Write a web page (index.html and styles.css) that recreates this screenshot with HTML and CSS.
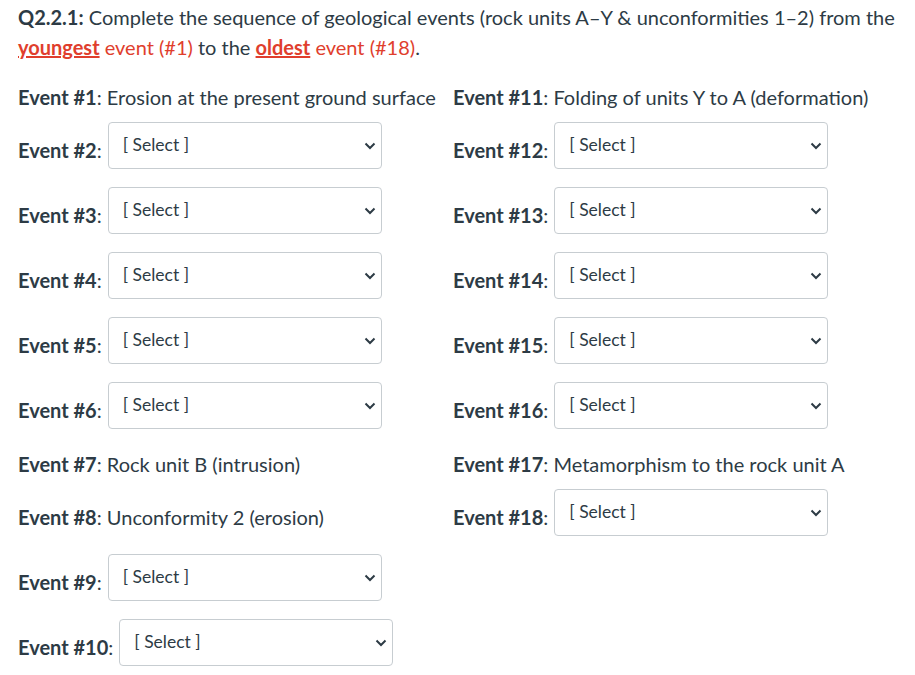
FILE: index.html
```html
<!DOCTYPE html>
<html>
<head>
<meta charset="utf-8">
<link rel="stylesheet" href="styles.css">
</head>
<body>
<div class="page">
  <p class="question"><strong>Q2.2.1:</strong> Complete the sequence of geological events (rock units A–Y &amp; unconformities 1–2) from the <span class="red"><strong><u>youngest</u></strong> event (#1)</span> to the <span class="red"><strong><u>oldest</u></strong> event (#18)</span>.</p>
  <div class="events">
    <div class="cell r1"><span class="lbl"><b>Event #1</b>: Erosion at the present ground surface</span></div>
    <div class="cell r1"><span class="lbl"><b>Event #11</b>: Folding of units Y to A (deformation)</span></div>

    <div class="cell"><span class="lbl"><b>Event #2</b>:</span><div class="sel"><span>[ Select ]</span><svg width="12" height="8" viewBox="0 0 12 8"><path d="M1.5 1.5 L6 6 L10.5 1.5" fill="none" stroke="#2d3b45" stroke-width="2"/></svg></div></div>
    <div class="cell"><span class="lbl"><b>Event #12</b>:</span><div class="sel"><span>[ Select ]</span><svg width="12" height="8" viewBox="0 0 12 8"><path d="M1.5 1.5 L6 6 L10.5 1.5" fill="none" stroke="#2d3b45" stroke-width="2"/></svg></div></div>

    <div class="cell"><span class="lbl"><b>Event #3</b>:</span><div class="sel"><span>[ Select ]</span><svg width="12" height="8" viewBox="0 0 12 8"><path d="M1.5 1.5 L6 6 L10.5 1.5" fill="none" stroke="#2d3b45" stroke-width="2"/></svg></div></div>
    <div class="cell"><span class="lbl"><b>Event #13</b>:</span><div class="sel"><span>[ Select ]</span><svg width="12" height="8" viewBox="0 0 12 8"><path d="M1.5 1.5 L6 6 L10.5 1.5" fill="none" stroke="#2d3b45" stroke-width="2"/></svg></div></div>

    <div class="cell"><span class="lbl"><b>Event #4</b>:</span><div class="sel"><span>[ Select ]</span><svg width="12" height="8" viewBox="0 0 12 8"><path d="M1.5 1.5 L6 6 L10.5 1.5" fill="none" stroke="#2d3b45" stroke-width="2"/></svg></div></div>
    <div class="cell"><span class="lbl"><b>Event #14</b>:</span><div class="sel"><span>[ Select ]</span><svg width="12" height="8" viewBox="0 0 12 8"><path d="M1.5 1.5 L6 6 L10.5 1.5" fill="none" stroke="#2d3b45" stroke-width="2"/></svg></div></div>

    <div class="cell"><span class="lbl"><b>Event #5</b>:</span><div class="sel"><span>[ Select ]</span><svg width="12" height="8" viewBox="0 0 12 8"><path d="M1.5 1.5 L6 6 L10.5 1.5" fill="none" stroke="#2d3b45" stroke-width="2"/></svg></div></div>
    <div class="cell"><span class="lbl"><b>Event #15</b>:</span><div class="sel"><span>[ Select ]</span><svg width="12" height="8" viewBox="0 0 12 8"><path d="M1.5 1.5 L6 6 L10.5 1.5" fill="none" stroke="#2d3b45" stroke-width="2"/></svg></div></div>

    <div class="cell"><span class="lbl"><b>Event #6</b>:</span><div class="sel"><span>[ Select ]</span><svg width="12" height="8" viewBox="0 0 12 8"><path d="M1.5 1.5 L6 6 L10.5 1.5" fill="none" stroke="#2d3b45" stroke-width="2"/></svg></div></div>
    <div class="cell"><span class="lbl"><b>Event #16</b>:</span><div class="sel"><span>[ Select ]</span><svg width="12" height="8" viewBox="0 0 12 8"><path d="M1.5 1.5 L6 6 L10.5 1.5" fill="none" stroke="#2d3b45" stroke-width="2"/></svg></div></div>

    <div class="cell"><span class="lbl"><b>Event #7</b>: Rock unit B (intrusion)</span></div>
    <div class="cell"><span class="lbl"><b>Event #17</b>: Metamorphism to the rock unit A</span></div>

    <div class="cell"><span class="lbl"><b>Event #8</b>: Unconformity 2 (erosion)</span></div>
    <div class="cell"><span class="lbl"><b>Event #18</b>:</span><div class="sel"><span>[ Select ]</span><svg width="12" height="8" viewBox="0 0 12 8"><path d="M1.5 1.5 L6 6 L10.5 1.5" fill="none" stroke="#2d3b45" stroke-width="2"/></svg></div></div>

    <div class="cell"><span class="lbl"><b>Event #9</b>:</span><div class="sel"><span>[ Select ]</span><svg width="12" height="8" viewBox="0 0 12 8"><path d="M1.5 1.5 L6 6 L10.5 1.5" fill="none" stroke="#2d3b45" stroke-width="2"/></svg></div></div>
    <div class="cell"></div>

    <div class="cell"><span class="lbl"><b>Event #10</b>:</span><div class="sel"><span>[ Select ]</span><svg width="12" height="8" viewBox="0 0 12 8"><path d="M1.5 1.5 L6 6 L10.5 1.5" fill="none" stroke="#2d3b45" stroke-width="2"/></svg></div></div>
    <div class="cell"></div>
  </div>
</div>
</body>
</html>
```

FILE: styles.css
```css
html, body {
  margin: 0;
  padding: 0;
  background: #ffffff;
}
body {
  font-family: Lato, "Open Sans", sans-serif;
  color: #2d3b45;
}
.page {
  padding: 0 18px;
}
.question {
  margin: 0;
  padding-top: 2px;
  font-size: 20px;
  line-height: 30px;
}
.red {
  color: #e03e2d;
}
.events {
  margin-top: 12px;
  display: grid;
  grid-template-columns: 435px 1fr;
  grid-template-rows: 39px repeat(5, 65px) 42px 65px 65px 65px;
}
.cell {
  display: flex;
  align-items: center;
  white-space: nowrap;
  font-size: 20px;
}
.lbl {
  padding-top: 9px;
  line-height: 22px;
}
.r1 .lbl {
  padding-top: 6px;
}
.lbl b {
  font-weight: 700;
}
.sel {
  margin-left: 6px;
  width: 274px;
  height: 47px;
  box-sizing: border-box;
  border: 1px solid #c7cdd1;
  border-radius: 4px;
  background: #fff;
  display: flex;
  align-items: center;
  justify-content: space-between;
  padding: 0 5px 0 14px;
  font-size: 17.5px;
}
.sel span {
  margin-top: -2px;
}
```
